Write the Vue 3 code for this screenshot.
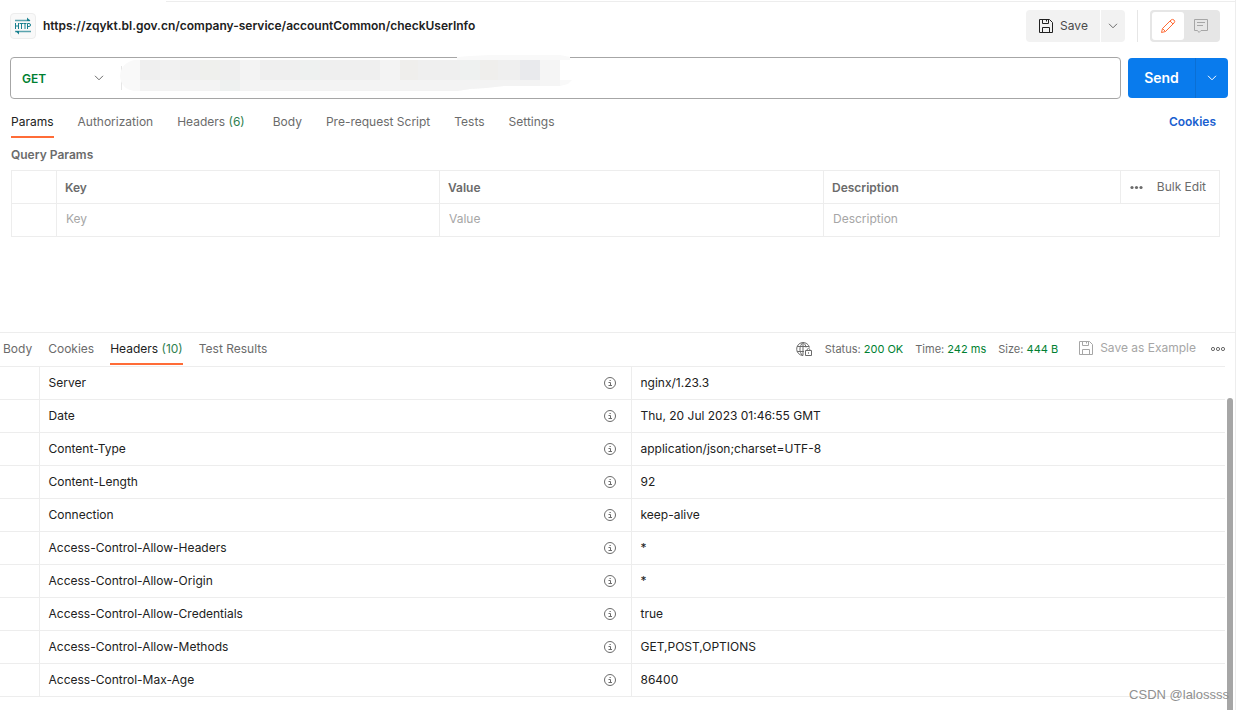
<script setup>
import { ref } from 'vue'

const method = ref('GET')
const url = ref('')

const requestTabs = [
  { label: 'Params', active: true },
  { label: 'Authorization' },
  { label: 'Headers', count: 6 },
  { label: 'Body' },
  { label: 'Pre-request Script' },
  { label: 'Tests' },
  { label: 'Settings' },
]

const responseTabs = [
  { label: 'Body' },
  { label: 'Cookies' },
  { label: 'Headers', count: 10, active: true },
  { label: 'Test Results' },
]

const stats = [
  { label: 'Status:', value: '200 OK' },
  { label: 'Time:', value: '242 ms' },
  { label: 'Size:', value: '444 B' },
]

const headers = [
  ['Server', 'nginx/1.23.3'],
  ['Date', 'Thu, 20 Jul 2023 01:46:55 GMT'],
  ['Content-Type', 'application/json;charset=UTF-8'],
  ['Content-Length', '92'],
  ['Connection', 'keep-alive'],
  ['Access-Control-Allow-Headers', '*'],
  ['Access-Control-Allow-Origin', '*'],
  ['Access-Control-Allow-Credentials', 'true'],
  ['Access-Control-Allow-Methods', 'GET,POST,OPTIONS'],
  ['Access-Control-Max-Age', '86400'],
]
</script>

<template>
  <div class="page">
    <main class="pane">
      <div class="tab-edge"></div>

      <header class="title-row">
        <span class="http-badge">
          <svg width="18" height="18" viewBox="0 0 18 18" fill="none" stroke="#17808f" stroke-width="1">
            <path d="M1 3.500H16M1 14.500H17" stroke-width="1.4" opacity=".7" />
            <path d="M13 .5L16.500 4H13zM5 17.500L1.500 14H5z" fill="#17808f" stroke="none" />
            <path d="M1.500 6v6M4.500 6v6M1.500 9h3M5.500 6.500h4M7.500 6.500V12M9.500 6.500h3M11 6.500V12M13.500 12V6.500h1.500q1.500 0 1.500 1.500t-1.500 1.500h-1.500" />
          </svg>
        </span>
        <h1>https://zqykt.bl.gov.cn/company-service/accountCommon/checkUserInfo</h1>
        <div class="save-group">
          <button class="save">
            <svg width="16" height="16" viewBox="0 0 16 16" fill="none" stroke="#212121">
              <path d="M1.500 1.500H11.500L14.500 4.500V14.500H1.500zM4.500 1.500V5.500H10.500V1.500M8.500 1.500V3.500M4.500 14.500V9.500H11.500V14.500" />
            </svg>
            Save
          </button>
          <button class="save-more" aria-label="More save options">
            <svg width="10" height="6" viewBox="0 0 10 6" fill="none" stroke="#6b6b6b"><path d="M1 .8L5 4.800L9 .8" /></svg>
          </button>
        </div>
        <div class="mode-group">
          <button class="mode on" aria-label="Edit">
            <svg width="16" height="16" viewBox="0 0 16 16" fill="none" stroke="#ff6c37">
              <path d="M1.500 14.500L2.500 10.500L11 2Q12.500 .8 14 2T14 5L5.500 13.500zM10 3L13 6M2.500 10.500L5.500 13.500" />
            </svg>
          </button>
          <button class="mode" aria-label="Comments">
            <svg width="16" height="16" viewBox="0 0 16 16" fill="none" stroke="#a6a6a6">
              <path d="M1.500 1.500H14.500V12.500H8L6 14.500L4.500 12.500H1.500zM4 4.500H12M4 7.500H10" />
            </svg>
          </button>
        </div>
      </header>

      <div class="url-row">
        <div class="url-box">
          <label class="method">
            <select v-model="method" aria-label="Method">
              <option>GET</option>
              <option>POST</option>
            </select>
            <svg width="10" height="6" viewBox="0 0 10 6" fill="none" stroke="#6b6b6b"><path d="M1 .8L5 4.800L9 .8" /></svg>
          </label>
          <input v-model="url" class="url" aria-label="Request URL" />
          <svg class="mosaic" width="454" height="38" viewBox="0 0 454 38">
            <path d="M14 5H337V2L350 1L370 0H440L450 2V5H440V25H452L448 29L440 31H384L366 33L350 34L337 36H14Q1 34 0 21Q1 8 14 5z" fill="#f9f9f9" />
            <path d="M20 25H440V31H384L366 33L350 34L337 36H20z" fill="#f3f3f3" />
            <path d="M20 5H440V25H20z" fill="#efefef" />
            <path d="M40 5h20v20H40zM80 5h20v20H80z" fill="#f1f1f1" />
            <path d="M80 5h20v20H80z" fill="#eff0ed" />
            <path d="M100 25h20v11h-20zM180 5h20v20h-20zM340 5h20v20h-20z" fill="#eef1f0" />
            <path d="M120 5h20v20h-20zM260 5h20v20h-20z" fill="#f3f3f3" />
            <path d="M280 5h18v20h-18zM360 5h18v20h-18z" fill="#efeeec" />
            <path d="M400 5h20v20h-20z" fill="#e9eaed" />
            <path d="M420 5h20v26h-20z" fill="#f5f5f5" />
          </svg>
        </div>
        <div class="send-group">
          <button class="send">Send</button>
          <button class="send-more" aria-label="More send options">
            <svg width="10" height="6" viewBox="0 0 10 6" fill="none" stroke="#fff"><path d="M1 .8L5 4.800L9 .8" /></svg>
          </button>
        </div>
      </div>

      <nav class="tabs request-tabs">
        <a v-for="t in requestTabs" :key="t.label" href="#" :class="{ active: t.active, counted: t.count }">{{ t.label }}<span v-if="t.count" class="count"> ({{ t.count }})</span></a>
        <a href="#" class="cookies">Cookies</a>
      </nav>

      <section class="params">
        <h2>Query Params</h2>
        <table>
          <colgroup>
            <col class="c-check" />
            <col class="c-key" />
            <col class="c-value" />
            <col />
            <col class="c-tools" />
          </colgroup>
          <thead>
            <tr>
              <th></th>
              <th>Key</th>
              <th>Value</th>
              <th>Description</th>
              <td>
                <div class="tools">
                  <button aria-label="More options">
                    <svg width="13" height="5" viewBox="0 0 13 5" fill="#6b6b6b">
                      <circle cx="2" cy="2.500" r="1.600" /><circle cx="6.500" cy="2.500" r="1.600" /><circle cx="11" cy="2.500" r="1.600" />
                    </svg>
                  </button>
                  <button>Bulk Edit</button>
                </div>
              </td>
            </tr>
          </thead>
          <tbody>
            <tr>
              <td></td>
              <td><input placeholder="Key" aria-label="Key" /></td>
              <td><input placeholder="Value" aria-label="Value" /></td>
              <td colspan="2"><input placeholder="Description" aria-label="Description" /></td>
            </tr>
          </tbody>
        </table>
      </section>

      <section class="response">
        <div class="response-bar">
          <nav class="tabs response-tabs">
            <a v-for="t in responseTabs" :key="t.label" href="#" :class="{ active: t.active }">{{ t.label }}<span v-if="t.count" class="count"> ({{ t.count }})</span></a>
          </nav>
          <div class="stats">
            <svg width="18" height="16" viewBox="0 0 18 16" fill="none" stroke="#6b6b6b">
              <path d="M8 14.500A6.500 6.500 0 1 1 14.500 6.500M7.500 14.500C4 11 4 5 8 1.500C10 3 10.800 4.500 11 6.500M8 1.500V14.500M2.200 5.500H14M2.200 10.500H9" />
              <path d="M10.500 9.500H16.500V14.500H10.500zM12 9.500V8.500Q13.500 6 15 8.500V9.500M13.500 11.300V12.700" />
            </svg>
            <span v-for="s in stats" :key="s.label">{{ s.label }} <b>{{ s.value }}</b></span>
          </div>
          <button class="save-example">
            <svg width="16" height="16" viewBox="0 0 16 16" fill="none" stroke="#a6a6a6">
              <path d="M1.500 1.500H11.500L14.500 4.500V14.500H1.500zM4.500 1.500V5.500H10.500V1.500M8.500 1.500V3.500M4.500 14.500V9.500H11.500V14.500" />
            </svg>
            Save as Example
          </button>
          <button class="more" aria-label="More actions">
            <svg width="16" height="6" viewBox="0 0 16 6" fill="none" stroke="#6b6b6b">
              <circle cx="3" cy="3" r="1.600" /><circle cx="8" cy="3" r="1.600" /><circle cx="13" cy="3" r="1.600" />
            </svg>
          </button>
        </div>

        <div class="response-body">
          <table>
            <colgroup>
              <col class="r-lead" />
              <col class="r-name" />
              <col />
            </colgroup>
            <tbody>
              <tr v-for="[name, value] in headers" :key="name">
                <td></td>
                <td>
                  <div class="name">
                    {{ name }}
                    <svg width="12" height="12" viewBox="0 0 12 12" fill="none" stroke="#6b6b6b">
                      <circle cx="6" cy="6" r="5.500" />
                      <path d="M4.500 5.500H6.500V8.500M4.500 8.500H8M5.500 3.500H6.800" />
                    </svg>
                  </div>
                </td>
                <td>{{ value }}</td>
              </tr>
            </tbody>
          </table>
          <div class="scrollbar"></div>
        </div>
      </section>
    </main>
    <div class="watermark">CSDN @lalossss</div>
  </div>
</template>

<style>
body {
  background: #fff;
  overflow: hidden;
}
</style>

<style scoped>
* {
  box-sizing: border-box;
}
.page {
  position: relative;
  height: 100vh;
  overflow: hidden;
  padding-right: 8px;
  font: 12px/16px Inter, sans-serif;
  color: #212121;
}
.pane {
  display: flex;
  flex-direction: column;
  height: 100%;
  border-right: 1px solid #ededed;
}
button {
  display: flex;
  align-items: center;
  justify-content: center;
  padding: 0;
  border: 0;
  background: none;
  font: inherit;
  color: inherit;
}
a {
  color: inherit;
  text-decoration: none;
}
svg {
  flex: none;
  display: block;
}
table {
  width: 100%;
  border-collapse: collapse;
  table-layout: fixed;
}

.tab-edge {
  height: 2px;
  margin-left: 166px;
  border-bottom: 1px solid #ededed;
}
.title-row {
  display: flex;
  align-items: center;
  height: 48px;
  padding: 0 15px 0 10px;
}
.http-badge {
  display: flex;
  align-items: center;
  justify-content: center;
  width: 26px;
  height: 26px;
  border: 1px solid #ededed;
  border-radius: 4px;
  background: #f9f9f9;
}
h1 {
  flex: 1;
  margin: 0 0 0 7px;
  font-size: 12px;
  font-weight: 600;
}
.save-group {
  display: flex;
  gap: 1px;
  height: 32px;
  color: #4a4a4a;
}
.save {
  gap: 6px;
  width: 74px;
  border-radius: 4px 0 0 4px;
  background: #f2f2f2;
}
.save-more {
  width: 24px;
  border-radius: 0 4px 4px 0;
  background: #f2f2f2;
}
.mode-group {
  display: flex;
  padding: 2px;
  margin-left: 25px;
  border-radius: 4px;
  background: #e6e6e6;
  position: relative;
}
.mode-group::before {
  content: '';
  position: absolute;
  left: -13px;
  top: 0;
  bottom: 0;
  border-left: 1px solid #e6e6e6;
}
.mode {
  width: 34px;
  height: 28px;
  border-radius: 3px;
}
.mode.on {
  width: 32px;
  background: #fff;
}

.url-row {
  display: flex;
  align-items: center;
  gap: 7px;
  margin-top: 7px;
  padding: 0 7px 0 10px;
}
.url-box {
  position: relative;
  display: flex;
  flex: 1;
  align-items: center;
  height: 42px;
  border: 1px solid #a6a6a6;
  border-radius: 4px;
}
.method {
  display: flex;
  align-items: center;
  width: 111px;
  height: 24px;
  padding: 0 17px 0 11px;
  border-right: 1px solid #e6e6e6;
}
select {
  flex: 1;
  min-width: 0;
  padding: 1px 0 0;
  border: 0;
  background: none;
  appearance: none;
  font: 600 12px/16px Inter, sans-serif;
  color: #007f31;
}
.url {
  flex: 1;
  height: 32px;
  border: 0;
  background: none;
  font: inherit;
}
/* Redaction painted over the address */
.mosaic {
  position: absolute;
  left: 109px;
  top: -3px;
}
.send-group {
  display: flex;
  height: 40px;
  border-radius: 4px;
  overflow: hidden;
  background: #097bed;
  color: #fff;
}
.send {
  width: 67px;
  font-size: 14px;
  font-weight: 600;
}
.send-more {
  width: 33px;
  border-left: 1px solid #0a6fd4;
}

.tabs {
  display: flex;
  color: #6b6b6b;
}
.tabs a {
  border-bottom: 2px solid transparent;
}
.tabs .active {
  border-color: #ff6c37;
  color: #212121;
}
.tabs .count {
  color: #2f8050;
  white-space: pre;
}
.request-tabs {
  gap: 24px;
  margin-top: 15px;
  padding: 0 19px 0 11px;
}
.request-tabs a {
  padding-bottom: 6px;
}
.request-tabs .counted {
  margin-right: 4px;
}
.request-tabs .cookies {
  margin-left: auto;
  font-weight: 600;
  color: #1a5fd0;
}

.params {
  height: 194px;
  padding: 9px 15px 0 11px;
}
h2 {
  margin: 0 0 7px;
  font-size: 12px;
  font-weight: 600;
  color: #6b6b6b;
}
.params th,
.params td {
  height: 33px;
  padding: 0 8px;
  border: 1px solid #ededed;
  text-align: left;
}
.params th {
  padding-top: 2px;
  font-weight: 600;
  color: #6b6b6b;
}
.params tbody td {
  padding-bottom: 2px;
}
.c-check {
  width: 45px;
}
.c-key {
  width: 383px;
}
.c-value {
  width: 384px;
}
.c-tools {
  width: 99px;
}
.params thead td {
  padding: 0;
}
.tools {
  display: flex;
  justify-content: space-between;
  padding: 0 13px 0 9px;
  color: #6b6b6b;
}
.params input {
  display: block;
  width: 100%;
  padding: 0 1px;
  border: 0;
  background: none;
  font: inherit;
}
.params input::placeholder {
  color: #a6a6a6;
}

.response {
  display: flex;
  flex: 1;
  flex-direction: column;
  min-height: 0;
  border-top: 1px solid #ededed;
}
.response-bar {
  display: flex;
  align-items: center;
  height: 33px;
  padding: 0 9px 1px 3px;
}
.response-tabs {
  flex: 1;
  gap: 16px;
  align-self: flex-end;
}
.response-tabs a {
  padding-bottom: 6px;
}
.stats {
  display: flex;
  align-items: center;
  gap: 12px;
  font-size: 11px;
  color: #6b6b6b;
}
.stats b {
  font-weight: 400;
  color: #007f31;
}
.save-example {
  gap: 6px;
  margin: 0 14px 0 20px;
  padding-bottom: 2px;
  color: #a6a6a6;
}
.response-body {
  display: flex;
  flex: 1;
  min-height: 0;
  padding-right: 2px;
}
.response-body table {
  flex: 1;
  width: 0;
  align-self: flex-start;
  margin-right: 2px;
}
.response-body td {
  height: 33px;
  padding: 0 9px;
  border: 1px solid #ededed;
}
.response-body td:first-child {
  border-left: 0;
}
.response-body td:last-child {
  border-right: 0;
}
.r-lead {
  width: 39px;
}
.r-name {
  width: 592px;
}
.name {
  display: flex;
  align-items: center;
  justify-content: space-between;
  padding-right: 6px;
}
.scrollbar {
  width: 6px;
  margin-top: 32px;
  border-radius: 3px 3px 0 0;
  background: #a6a6a6;
}
.watermark {
  position: absolute;
  right: 15px;
  bottom: 6px;
  font: 13px/18px "Liberation Sans", Arial, sans-serif;
  color: #8f8f8f;
}
</style>
